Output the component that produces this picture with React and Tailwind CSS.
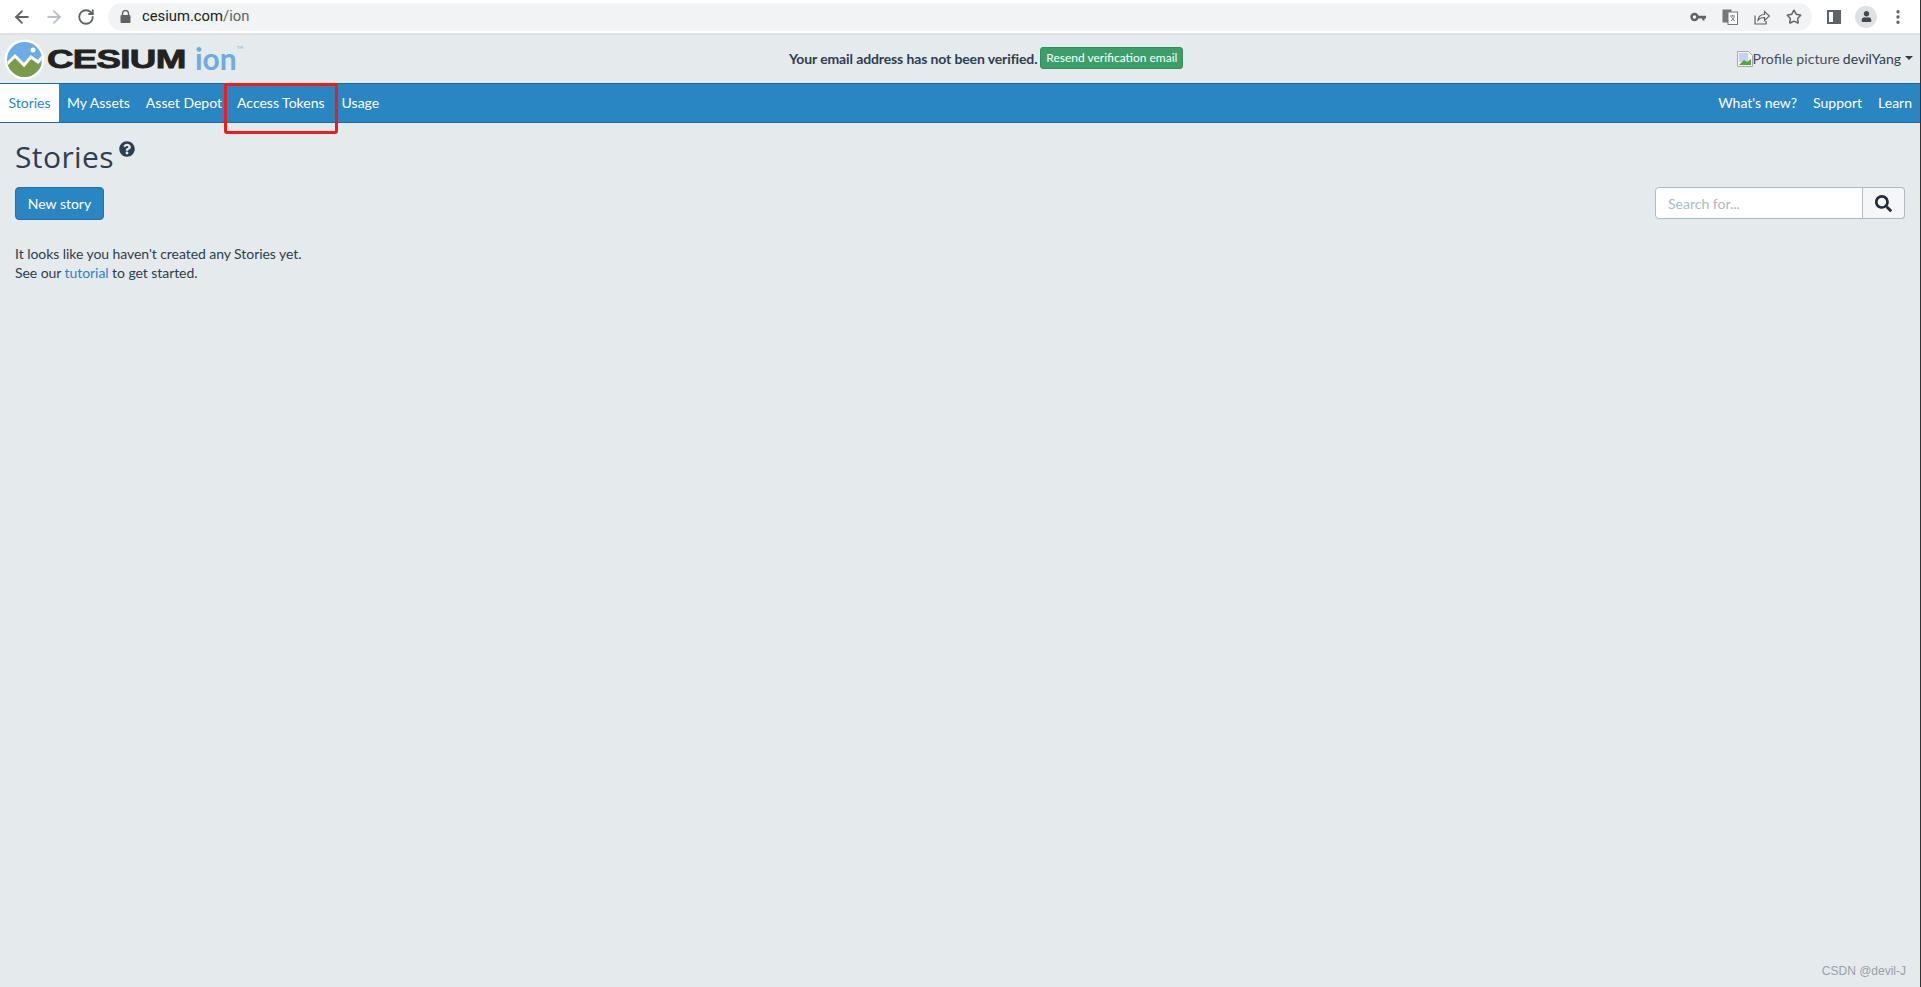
import React from "react";
import { ArrowLeft, ArrowRight, RotateCw, Star, EllipsisVertical } from "lucide-react";
import { FaQuestionCircle, FaSearch, FaUser } from "react-icons/fa";

function Logo() {
  return (
    <div className="flex items-center h-full pl-[4px]">
      <svg width="41" height="41" viewBox="0 0 41 41" className="shrink-0">
        <circle cx="20.5" cy="20.5" r="20" fill="#fff" />
        <clipPath id="c"><circle cx="20.5" cy="20.5" r="17.5" /></clipPath>
        <g clipPath="url(#c)">
          <rect width="41" height="41" fill="#6cabe4" />
          <path d="M0 28 L11 17 L20 26 L27 19 L41 27 V41 H0 Z" fill="#7c9b4a" />
          <path d="M1 27 L11 17 L20 26 L27 18 L34 23 L41 15" fill="none" stroke="#fff" strokeWidth="3" />
          <circle cx="29" cy="11" r="2.5" fill="#fff" />
        </g>
      </svg>
      <span className="ml-[2px] w-[139px] font-['Liberation_Sans',sans-serif] font-bold text-[25px] leading-none text-[#222] origin-left scale-x-[1.47] [-webkit-text-stroke:0.8px_#222] tracking-[-0.5px]">CESIUM</span>
      <span className="ml-[9px] font-['Lato',sans-serif] font-bold text-[30px] leading-none text-[#6cabe4] -mt-[3px]">ion</span>
      <span className="text-[4px] text-[#6cabe4] -mt-[22px]">TM</span>
    </div>
  );
}

function NavLink({ children, active, className = "" }) {
  return (
    <a className={"flex items-center px-2 pb-[2px] h-full " + (active ? "bg-white text-[#2a85c3] " : "text-white ") + className}>{children}</a>
  );
}

export default function App() {
  return (
    <div className="relative h-[987px] w-[1921px] overflow-hidden flex flex-col bg-[#e5eaed] font-['Lato',sans-serif] text-[14px] text-[#2c3e50] border-r border-[#333]">
      {/* browser toolbar */}
      <div className="h-[35px] shrink-0 bg-white border-b-2 border-[#dfe1e5] flex items-center text-[#5f6368]">
        <ArrowLeft className="ml-[12px] w-[20px] h-[20px]" strokeWidth={2.2} />
        <ArrowRight className="ml-[12px] w-[20px] h-[20px] text-[#bdc1c6]" strokeWidth={2.2} />
        <RotateCw className="ml-[13px] w-[18px] h-[18px]" strokeWidth={2.4} />
        <div className="ml-[13px] h-[28px] flex-1 rounded-full bg-[#f1f3f4] flex items-center pl-[12px]">
          <svg width="11" height="13" viewBox="0 0 11 13" fill="#5f6368"><rect x="0.5" y="5" width="10" height="8" rx="1" /><path d="M2.5 5.5V3.5a3 3 0 0 1 6 0v2" fill="none" stroke="#5f6368" strokeWidth="1.4" /></svg>
          <span className="ml-[11px] font-['Roboto',sans-serif] text-[14.8px] -mt-[1px]"><span className="text-[#202124]">cesium.com</span>/ion</span>
          <div className="ml-auto flex items-center pr-[10px] gap-[16px]">
            <svg width="16" height="16" viewBox="0 0 16 16" fill="#5f6368"><circle cx="4.5" cy="8" r="3" fill="none" stroke="#5f6368" strokeWidth="2.4" /><path d="M7 6.8h9v2.6h-1.5v2h-2.2v-2H7z" /></svg>
            <svg width="16" height="16" viewBox="0 0 16 16"><rect x="0.5" y="0.5" width="9" height="13" fill="#777" /><rect x="6" y="3" width="9.5" height="12.5" fill="#fff" stroke="#777" /><path d="M8 7h5M10.5 6v1M9 12l3.5-4M9.5 8l3 4" stroke="#777" fill="none" /></svg>
            <svg width="16" height="16" viewBox="0 0 16 16" fill="none" stroke="#5f6368" strokeWidth="1.2"><path d="M1 6.5V15h11v-3" /><path d="M4 11c.5-3.5 3-5.5 6.5-5.5V2.5L15.5 7l-5 4.5V8.5C8 8.5 5.5 9.3 4 11z" /></svg>
            <Star className="w-[16px] h-[16px]" strokeWidth={2.2} />
          </div>
        </div>
        <div className="ml-[15px] w-[14px] h-[14px] border-2 border-[#5f6368] flex justify-end"><div className="w-[6px] bg-[#5f6368]" /></div>
        <div className="ml-[14px] w-[22px] h-[22px] rounded-full bg-[#dee1e6] flex items-center justify-center"><FaUser className="w-[11px] h-[11px] text-[#45494f]" /></div>
        <EllipsisVertical className="ml-[12px] mr-[13px] w-[18px] h-[18px]" strokeWidth={2.5} />
      </div>

      {/* header */}
      <div className="h-[48px] shrink-0 relative flex items-center justify-between">
        <Logo />
        <div className="absolute left-[789px] top-[12px] flex items-center">
          <span className="font-bold text-[#2c3e50] tracking-[-0.12px]">Your email address has not been verified.</span>
          <button className="ml-[3px] h-[22px] w-[143px] rounded-[3px] bg-[#3c9e68] border border-[#358c5c] text-white text-[12px] leading-none">Resend verification email</button>
        </div>
        <div className="flex items-center pr-[7px] -mt-[1px]">
          <svg width="16" height="16" viewBox="0 0 16 16" className="shrink-0 mt-[2px]">
            <path d="M.5.5h11l4 4v11H.5z" fill="#f4f4f4" stroke="#a8a8a8" />
            <path d="M2 2h9v9H2z" fill="#c4d4ee" />
            <path d="M2 14l5-5 3 2 4-3v6z" fill="#4fa83d" />
          </svg>
          <span className="text-[#44505c] text-[14.2px]">Profile picture</span>
          <span className="ml-[3px]">devilYang</span>
          <span className="ml-[4px] w-0 h-0 border-x-[4px] border-x-transparent border-t-[4px] border-t-[#2c3e50]" />
        </div>
      </div>

      {/* nav */}
      <nav className="h-[40px] shrink-0 bg-[#2a85c3] border-y border-[#1f6aa0] flex items-center justify-between text-[14px]">
        <div className="flex h-full">
          <NavLink active className="w-[59px] justify-center">Stories</NavLink>
          <NavLink>My Assets</NavLink>
          <NavLink className="-mr-[1px]">Asset Depot</NavLink>
          <NavLink className="pr-[9px]">Access Tokens</NavLink>
          <NavLink>Usage</NavLink>
        </div>
        <div className="flex h-full">
          <NavLink>What's new?</NavLink>
          <NavLink>Support</NavLink>
          <NavLink>Learn</NavLink>
        </div>
      </nav>

      {/* page */}
      <main className="flex-1 px-[15px] pt-[16px] relative">
        <div className="flex items-start">
          <h1 className="font-['Open_Sans',sans-serif] text-[30px] leading-[36px] tracking-[0.4px] font-medium">Stories</h1>
          <FaQuestionCircle className="ml-[5px] mt-[2px] w-[16px] h-[16px]" />
        </div>
        <div className="mt-[12px] flex items-center justify-between">
          <button className="h-[33px] w-[89px] rounded-[4px] bg-[#2a85c3] border border-[#2272a8] text-white text-[14px]">New story</button>
          <div className="flex h-[32px] w-[250px] -mt-[1px]">
            <div className="flex-1 bg-white border border-[#a9bac8] rounded-l-[4px] pl-[12px] flex items-center text-[#a9bac8]">Search for...</div>
            <div className="w-[42px] bg-[#f4f6f8] border border-l-0 border-[#a9bac8] rounded-r-[4px] flex items-center justify-center">
              <FaSearch className="w-[17px] h-[17px] text-[#1f2d3a]" />
            </div>
          </div>
        </div>
        <p className="mt-[24px] leading-[19px] tracking-[-0.06px]">It looks like you haven't created any Stories yet.<br />See our <a className="text-[#2a85c3]">tutorial</a> to get started.</p>
      </main>

      <div className="absolute left-[224px] top-[83px] w-[114px] h-[51px] border-[3px] border-[#f01c1c] rounded-[3px]" />
      <div className="absolute right-[14px] bottom-[7px] font-['Liberation_Sans',sans-serif] text-[12px] text-[#9aa0a4]">CSDN @devil-J</div>
    </div>
  );
}
